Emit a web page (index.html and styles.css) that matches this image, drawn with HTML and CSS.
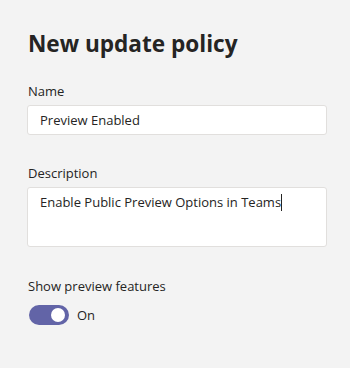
FILE: index.html
```html
<!DOCTYPE html>
<html lang="en">
<head>
  <meta charset="UTF-8">
  <meta name="viewport" content="width=device-width, initial-scale=1.0">
  <title>New update policy</title>
  <link rel="stylesheet" href="styles.css">
</head>
<body>
  <div class="painel">
    <h1 class="titulo">New update policy</h1>

    <div class="campo">
      <label class="rotulo" for="nome">Name</label>
      <div class="caixa" id="nome">Preview Enabled</div>
    </div>

    <div class="campo campo-descricao">
      <label class="rotulo" for="descricao">Description</label>
      <div class="caixa caixa-grande" id="descricao">Enable Public Preview Options in Teams<span class="cursor"></span></div>
    </div>

    <div class="campo campo-toggle">
      <div class="rotulo">Show preview features</div>
      <div class="toggle-linha">
        <span class="toggle"><span class="bolinha"></span></span>
        <span class="toggle-texto">On</span>
      </div>
    </div>
  </div>
</body>
</html>
```

FILE: styles.css
```css
/* Estilos gerais */
body {
  margin: 0;
  padding: 0;
  font-family: "Open Sans", "Noto Sans", sans-serif;
  background: #f3f3f3;
  color: #252423;
}

.painel {
  width: 300px;
  padding: 26px 0 0 27px;
}

.titulo {
  margin: 0 0 0 1px;
  font-size: 22.6px;
  font-weight: 700;
  line-height: 36px;
}

.campo {
  margin-top: 19px;
}

.campo-descricao {
  margin-top: 28px;
}

.campo-toggle {
  margin-top: 29px;
}

.rotulo {
  display: block;
  font-size: 13px;
  line-height: 20px;
  margin: 0 0 4px 1px;
}

.caixa {
  box-sizing: border-box;
  height: 30px;
  padding: 4px 12px;
  font-size: 13px;
  line-height: 20px;
  background: #fff;
  border: 1px solid #e1dfdd;
  border-radius: 3px;
}

.caixa-grande {
  height: 60px;
}

.cursor {
  display: inline-block;
  width: 1px;
  height: 17px;
  background: #252423;
  vertical-align: -4px;
}

/* Botao de liga/desliga */
.campo-toggle .rotulo {
  margin-bottom: 9px;
}

.toggle-linha {
  display: flex;
  align-items: center;
  margin-left: 2px;
}

.toggle {
  box-sizing: border-box;
  width: 40px;
  height: 20px;
  border-radius: 10px;
  background: #6264a7;
  display: flex;
  align-items: center;
  justify-content: flex-end;
  padding-right: 4px;
}

.bolinha {
  width: 14px;
  height: 14px;
  border-radius: 50%;
  background: #fff;
}

.toggle-texto {
  margin-left: 8px;
  font-size: 13px;
}
```
